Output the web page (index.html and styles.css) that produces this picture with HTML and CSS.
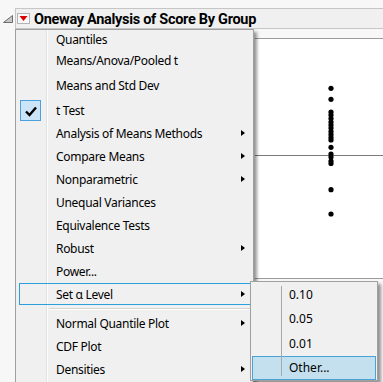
FILE: index.html
```html
<!DOCTYPE html>
<html>
<head>
<meta charset="utf-8">
<link rel="stylesheet" href="styles.css">
</head>
<body>
<div class="page">
  <div class="outline">
    <svg class="disc" width="14" height="21" viewBox="0 0 14 21"><polygon points="3.5,14.5 12.5,14.5 12.5,7.5" fill="#c8c8c8" stroke="#6e6e6e" stroke-width="1"/></svg>
    <div class="box">
      <span class="redbtn"><svg width="11" height="9" viewBox="0 0 11 9"><polygon points="1.5,2 9.5,2 5.5,7" fill="#e00000"/></svg></span>
      <span class="title">Oneway Analysis of Score By Group</span>
    </div>
  </div>
  <div class="content">
    <div class="plot">
      <svg width="128" height="239" viewBox="0 0 128 239">
        <line x1="0" y1="116.5" x2="128" y2="116.5" stroke="#7a7a7a" stroke-width="1"/>
        <g fill="#000">
          <circle cx="76" cy="49.3" r="2.6"/>
          <circle cx="76" cy="60.3" r="2.6"/>
          <circle cx="76" cy="73" r="2.6"/>
          <circle cx="76" cy="76" r="2.6"/>
          <circle cx="76" cy="79.5" r="2.6"/>
          <circle cx="76" cy="83" r="2.6"/>
          <circle cx="76" cy="86" r="2.6"/>
          <circle cx="76" cy="89" r="2.6"/>
          <circle cx="76" cy="92.5" r="2.6"/>
          <circle cx="76" cy="95.5" r="2.6"/>
          <circle cx="76" cy="98.5" r="2.6"/>
          <circle cx="76" cy="101" r="2.6"/>
          <circle cx="76" cy="108.3" r="2.6"/>
          <circle cx="76" cy="115" r="2.6"/>
          <circle cx="76" cy="118" r="2.6"/>
          <circle cx="76" cy="122" r="2.6"/>
          <circle cx="76" cy="124.5" r="2.6"/>
          <circle cx="76" cy="150.7" r="2.6"/>
          <circle cx="76" cy="175" r="2.6"/>
        </g>
      </svg>
    </div>
  </div>

  <div class="menu">
    <div class="mi">Quantiles</div>
    <div class="mi">Means/Anova/Pooled t</div>
    <div class="mi">Means and Std Dev</div>
    <div class="mi"><span class="chk"><svg width="14" height="12" viewBox="0 0 14 12"><path d="M2 6.5 L5.5 10 L12 2.5" fill="none" stroke="#000" stroke-width="2.4"/></svg></span>t Test</div>
    <div class="mi">Analysis of Means Methods<span class="arr"></span></div>
    <div class="mi">Compare Means<span class="arr"></span></div>
    <div class="mi">Nonparametric<span class="arr"></span></div>
    <div class="mi">Unequal Variances</div>
    <div class="mi">Equivalence Tests</div>
    <div class="mi">Robust<span class="arr"></span></div>
    <div class="mi">Power...</div>
    <div class="mi hot">Set α Level<span class="arr"></span></div>
    <div class="sep"></div>
    <div class="mi">Normal Quantile Plot<span class="arr"></span></div>
    <div class="mi">CDF Plot</div>
    <div class="mi">Densities<span class="arr"></span></div>
  </div>

  <div class="submenu">
    <div class="si">0.10</div>
    <div class="si">0.05</div>
    <div class="si">0.01</div>
    <div class="si sel">Other...</div>
  </div>
</div>
</body>
</html>
```

FILE: styles.css
```css
html, body {
  margin: 0;
  padding: 0;
}
body {
  background: #f7f7f7;
  font-family: "Noto Sans", "Open Sans", sans-serif;
  color: #000;
}
.page {
  position: relative;
  width: 383px;
  height: 382px;
  overflow: hidden;
  padding-top: 8px;
  box-sizing: border-box;
}
.outline {
  display: flex;
  height: 21px;
}
.disc {
  width: 14px;
  height: 21px;
  flex: none;
  margin-right: 1px;
}
.box {
  flex: 1;
  display: flex;
  align-items: center;
  border-top: 1px solid #c6c6c6;
  border-left: 1px solid #c6c6c6;
  border-bottom: 1px solid #c6c6c6;
  background: #f0f0f0;
  height: 21px;
  box-sizing: border-box;
}
.redbtn {
  display: flex;
  align-items: center;
  justify-content: center;
  width: 13px;
  height: 11px;
  margin-left: 1px;
  border: 1px solid #b4b4b4;
  background: #f8f8f8;
  box-sizing: border-box;
}
.redbtn svg { display: block; }
.title {
  margin-left: 4px;
  font-family: Roboto, "Noto Sans", sans-serif;
  font-weight: 700;
  font-size: 14.5px;
  letter-spacing: -0.3px;
  line-height: 19px;
  white-space: nowrap;
  position: relative;
  top: 1px;
}
.content {
  padding-left: 255px;
  padding-top: 9px;
}
.plot {
  background: #fff;
  border-top: 1px solid #9c9c9c;
  border-bottom: 1px solid #9c9c9c;
  height: 239px;
}
.plot svg { display: block; }

.menu {
  position: absolute;
  left: 15px;
  top: 29px;
  width: 239px;
  height: 360px;
  box-sizing: border-box;
  border: 1px solid #a0a0a0;
  background: #f0f0f0;
  box-shadow: 3px 3px 3px rgba(0,0,0,0.4);
  font-size: 12px;
  letter-spacing: -0.3px;
}
.menu::before {
  content: "";
  position: absolute;
  left: 30px;
  top: 0;
  bottom: 0;
  width: 1px;
  background: #e2e2e2;
  box-shadow: 1px 0 0 #fdfdfd;
}
.mi {
  position: relative;
  height: 23px;
  display: flex;
  align-items: center;
  padding-left: 40px;
  white-space: nowrap;
}
.mi:nth-child(1) { height: 18px; }
.mi:nth-child(2) { height: 25px; }
.mi:nth-child(3) { height: 25px; }
.mi:nth-child(4) { height: 24px; }
.arr {
  position: absolute;
  right: 8px;
  top: 8px;
  width: 0;
  height: 0;
  border-top: 3.5px solid transparent;
  border-bottom: 3.5px solid transparent;
  border-left: 4px solid #000;
}
.chk {
  position: absolute;
  left: 4px;
  top: 2px;
  width: 21px;
  height: 21px;
  box-sizing: border-box;
  border: 1px solid #4ba1dc;
  background: #cce4f7;
  display: flex;
  align-items: center;
  justify-content: center;
}
.chk svg { display: block; }
.hot::after {
  content: "";
  position: absolute;
  left: 3px;
  right: 2px;
  top: 0;
  bottom: 1px;
  border: 1px solid #2a9fdb;
}
.sep {
  height: 6px;
  position: relative;
}
.sep::after {
  content: "";
  position: absolute;
  left: 33px;
  right: 0;
  top: 2px;
  height: 1px;
  background: #d4d4d4;
  box-shadow: 0 1px 0 #fdfdfd;
}

.submenu {
  position: absolute;
  left: 250px;
  top: 281px;
  width: 128px;
  height: 100px;
  box-sizing: border-box;
  border: 1px solid #a0a0a0;
  background: #f0f0f0;
  box-shadow: 3px 3px 3px rgba(0,0,0,0.4);
  font-size: 12px;
}
.submenu::before {
  content: "";
  position: absolute;
  left: 30px;
  top: 4px;
  bottom: 4px;
  width: 1px;
  background: #a8a8a8;
  z-index: 1;
}
.si {
  position: relative;
  height: 24.5px;
  display: flex;
  align-items: center;
  padding-left: 38px;
  white-space: nowrap;
}
.si.sel {
  z-index: 0;
}
.si.sel::before {
  content: "";
  position: absolute;
  left: 1px;
  right: 1px;
  top: 0;
  bottom: 0;
  background: #c4dfee;
  border: 1px solid #4ba2d4;
  z-index: -1;
}
```
